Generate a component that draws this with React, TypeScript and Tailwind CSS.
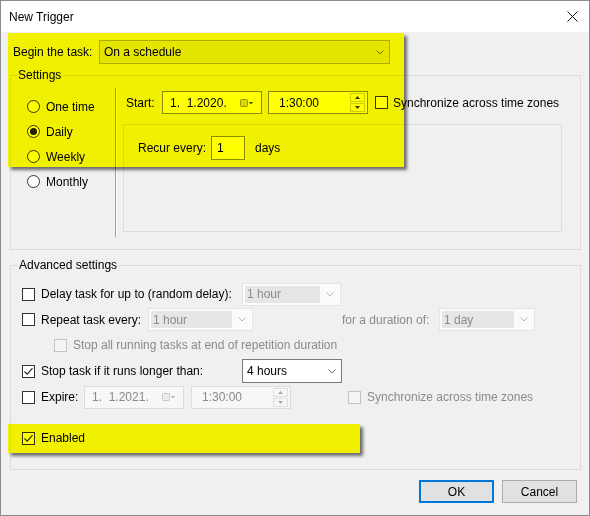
import React from "react";

const F = { fontFamily: '"Liberation Sans", Arial, sans-serif' };

function Chevron({ color = "#606060" }: { color?: string }) {
  return (
    <svg width="8" height="5" viewBox="0 0 8 5" className="shrink-0">
      <polyline points="0.5,0.5 4,4 7.5,0.5" fill="none" stroke={color} strokeWidth="1" />
    </svg>
  );
}

function CalIcon({ disabled }: { disabled?: boolean }) {
  const c = disabled ? "#c8c8c8" : "#9a9a9a";
  return (
    <svg width="13" height="8" viewBox="0 0 13 8" className="shrink-0">
      <rect x="0.5" y="0.5" width="7" height="7" rx="1" fill={disabled ? "#ececec" : "#d8d8d8"} stroke={c} />
      <polygon points="9,3 13,3 11,5.5" fill={disabled ? "#b0b0b0" : "#404040"} />
    </svg>
  );
}

function Spin({ disabled }: { disabled?: boolean }) {
  const b = disabled ? "border-[#dedede]" : "border-[#cfcfcf]";
  const f = disabled ? "#a8a8a8" : "#303030";
  return (
    <div className="flex flex-col gap-[1px] mr-[2px]">
      <div className={`w-[15px] h-[9px] border ${b} flex items-center justify-center`}>
        <svg width="5" height="3" viewBox="0 0 5 3"><polygon points="0,3 5,3 2.5,0" fill={f} /></svg>
      </div>
      <div className={`w-[15px] h-[9px] border ${b} flex items-center justify-center`}>
        <svg width="5" height="3" viewBox="0 0 5 3"><polygon points="0,0 5,0 2.5,3" fill={f} /></svg>
      </div>
    </div>
  );
}

function Check({ checked, disabled }: { checked?: boolean; disabled?: boolean }) {
  return (
    <div
      className={`w-[13px] h-[13px] shrink-0 border flex items-center justify-center ${
        disabled ? "border-[#c4c4c4] bg-[#f4f4f4]" : "border-[#333333] bg-white"
      }`}
    >
      {checked && (
        <svg width="11" height="11" viewBox="0 0 11 11">
          <polyline points="1.5,5.5 4.2,8.2 9.5,2.2" fill="none" stroke="#222" strokeWidth="1.1" />
        </svg>
      )}
    </div>
  );
}

function Radio({ checked }: { checked?: boolean }) {
  return (
    <div className="w-[13px] h-[13px] shrink-0 rounded-full border border-[#333333] bg-white flex items-center justify-center">
      {checked && <div className="w-[7px] h-[7px] rounded-full bg-[#222]" />}
    </div>
  );
}

function Combo({
  w,
  text,
  disabled,
  white,
  h = "h-[23px]",
}: {
  w: string;
  text: string;
  disabled?: boolean;
  white?: boolean;
  h?: string;
}) {
  if (disabled) {
    return (
      <div className={`${w} ${h} border border-[#e4e4e4] bg-[#fbfbfb] flex items-center p-[2px] gap-[6px]`}>
        <div className="flex-1 h-full bg-[#e6e6e6] flex items-center pl-[2px] text-[#8a8a8a]">{text}</div>
        <div className="mr-[4px]"><Chevron color="#b8b8b8" /></div>
      </div>
    );
  }
  return (
    <div
      className={`${w} ${h} border flex items-center pl-[4px] pr-[5px] justify-between ${
        white ? "border-[#7a7a7a] bg-white" : "border-[#adadad] bg-[#e5e5e5]"
      }`}
    >
      <span>{text}</span>
      <Chevron color="#707070" />
    </div>
  );
}

export default function App() {
  return (
    <div
      className="relative w-[590px] h-[516px] border border-[#8c8c8c] bg-[#f0f0f0] text-[12px] text-black overflow-hidden"
      style={F}
    >
      {/* title bar */}
      <div className="h-[31px] bg-white flex items-center justify-between pl-[8px] pr-[11px]">
        <span className="text-[12px]">New Trigger</span>
        <svg width="11" height="11" viewBox="0 0 11 11">
          <line x1="0.5" y1="0.5" x2="10.5" y2="10.5" stroke="#111" strokeWidth="1" />
          <line x1="10.5" y1="0.5" x2="0.5" y2="10.5" stroke="#111" strokeWidth="1" />
        </svg>
      </div>

      <div className="pt-[8px] flex flex-col">
        {/* begin row */}
        <div className="flex items-center pl-[12px]">
          <div className="w-[86px]">Begin the task:</div>
          <Combo w="w-[291px]" h="h-[24px]" text="On a schedule" />
        </div>

        {/* settings */}
        <fieldset className="ml-[9px] mt-[3px] w-[571px] h-[183px] border border-[#dcdcdc]">
          <legend className="ml-[6px] px-[1px] leading-[16px]">Settings</legend>
          <div className="flex">
            <div className="w-[104px] pt-[11px] pl-[16px] flex flex-col">
              {[
                ["One time", false],
                ["Daily", true],
                ["Weekly", false],
                ["Monthly", false],
              ].map(([t, c]) => (
                <div key={t as string} className="h-[25px] flex items-center gap-[6px]">
                  <Radio checked={c as boolean} />
                  <span>{t as string}</span>
                </div>
              ))}
            </div>
            <div className="mt-[5px] h-[149px] w-0 border-l border-r border-l-[#a0a0a0] border-r-white" />
            <div className="flex flex-col">
              <div className="mt-[8px] pl-[9px] flex items-center">
                <div className="w-[36px]">Start:</div>
                <div className="w-[100px] h-[23px] border border-[#8c8c8c] bg-white flex items-center justify-between pl-[7px] pr-[8px]">
                  <span>1.&nbsp; 1.2020.</span>
                  <CalIcon />
                </div>
                <div className="ml-[6px] w-[100px] h-[23px] border border-[#8c8c8c] bg-white flex items-center justify-between pl-[10px]">
                  <span>1:30:00</span>
                  <Spin />
                </div>
                <div className="ml-[7px]"><Check /></div>
                <span className="ml-[5px] whitespace-nowrap">Synchronize across time zones</span>
              </div>
              <div className="ml-[6px] mt-[10px] w-[439px] h-[108px] border border-[#dcdcdc] pt-[11px] pl-[14px]">
                <div className="flex items-center">
                  <div className="w-[73px]">Recur every:</div>
                  <div className="w-[34px] h-[24px] border border-[#8c8c8c] bg-white flex items-center pl-[5px]">1</div>
                  <span className="ml-[10px]">days</span>
                </div>
              </div>
            </div>
          </div>
        </fieldset>

        {/* advanced */}
        <fieldset className="ml-[9px] mt-[7px] w-[571px] h-[213px] border border-[#dcdcdc]">
          <legend className="ml-[7px] px-[1px] leading-[16px]">Advanced settings</legend>
          <div className="pt-[8px] pl-[11px] flex flex-col">
            <div className="h-[26px] flex items-center">
              <Check />
              <div className="ml-[6px] w-[201px]">Delay task for up to (random delay):</div>
              <Combo w="w-[99px]" text="1 hour" disabled />
            </div>
            <div className="h-[25px] flex items-center">
              <Check />
              <div className="ml-[6px] w-[107px]">Repeat task every:</div>
              <Combo w="w-[105px]" text="1 hour" disabled />
              <div className="ml-[89px] w-[97px] text-[#8a8a8a]">for a duration of:</div>
              <Combo w="w-[96px]" text="1 day" disabled />
            </div>
            <div className="h-[26px] flex items-center pl-[32px]">
              <Check disabled />
              <span className="ml-[6px] text-[#8a8a8a]">Stop all running tasks at end of repetition duration</span>
            </div>
            <div className="h-[26px] flex items-center">
              <Check checked />
              <div className="ml-[6px] w-[201px]">Stop task if it runs longer than:</div>
              <Combo w="w-[100px]" h="h-[24px]" text="4 hours" white />
            </div>
            <div className="h-[26px] flex items-center">
              <Check />
              <div className="ml-[6px] w-[43px]">Expire:</div>
              <div className="w-[100px] h-[23px] border border-[#dcdcdc] bg-[#f7f7f7] flex items-center justify-between pl-[7px] pr-[8px] text-[#8a8a8a]">
                <span>1.&nbsp; 1.2021.</span>
                <CalIcon disabled />
              </div>
              <div className="ml-[7px] w-[100px] h-[23px] border border-[#dcdcdc] bg-[#f7f7f7] flex items-center justify-between pl-[10px] text-[#8a8a8a]">
                <span>1:30:00</span>
                <Spin disabled />
              </div>
              <div className="ml-[57px]"><Check disabled /></div>
              <span className="ml-[6px] text-[#8a8a8a] whitespace-nowrap">Synchronize across time zones</span>
            </div>
            <div className="mt-[15px] h-[26px] flex items-center">
              <Check checked />
              <span className="ml-[6px]">Enabled</span>
            </div>
          </div>
        </fieldset>

        {/* buttons */}
        <div className="mt-[10px] flex justify-end gap-[8px] pr-[12px]">
          <button className="w-[75px] h-[23px] border-2 border-[#0078d7] bg-[#e1e1e1] text-[12px]" style={F}>
            OK
          </button>
          <button className="w-[75px] h-[23px] border border-[#adadad] bg-[#e1e1e1] text-[12px]" style={F}>
            Cancel
          </button>
        </div>
      </div>

      {/* highlight overlays */}
      <div className="absolute left-[7px] top-[32px] w-[396px] h-[134px] bg-[#ffff00] mix-blend-multiply shadow-[3px_3px_3px_rgba(0,0,0,0.55)] pointer-events-none" />
      <div className="absolute left-[7px] top-[423px] w-[352px] h-[29px] bg-[#ffff00] mix-blend-multiply shadow-[3px_3px_3px_rgba(0,0,0,0.55)] pointer-events-none" />
    </div>
  );
}
